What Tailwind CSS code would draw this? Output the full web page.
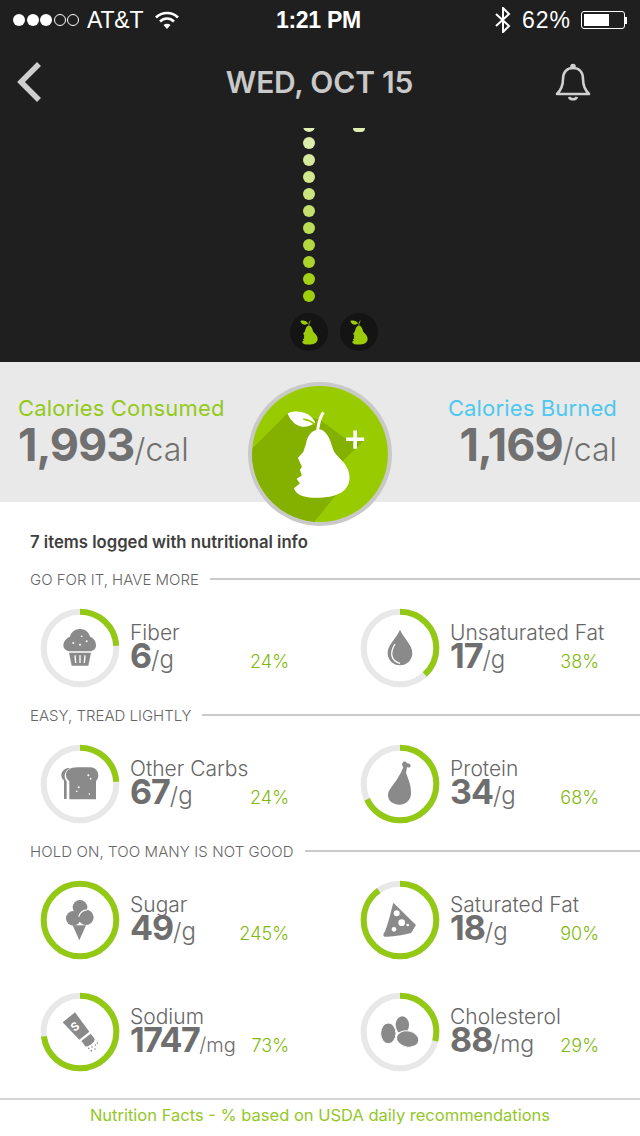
<!DOCTYPE html>
<html lang="en">
<head>
<meta charset="UTF-8">
<meta name="viewport" content="width=device-width, initial-scale=1.0">
<title>Nutrition</title>
<script src="https://cdn.jsdelivr.net/npm/@tailwindcss/browser@4"></script>
</head>
<body class="bg-white [font-family:Inter,sans-serif]">
<svg width="0" height="0" class="absolute">
  <symbol id="pear" viewBox="200 122 192 264">
    <path d="M203 130C235 118 272 128 286 158C262 178 222 178 203 130Z"/>
    <path d="M293 180C296 160 298 145 310 128" fill="none" stroke="currentColor" stroke-width="9"/>
    <path d="M297 178C318 180 330 205 338 235C345 262 385 275 388 318C390 355 365 378 310 382C270 384 232 382 222 354L240 340L230 326L246 316L240 300L246 290L234 264L250 246L258 222C262 200 272 182 297 178Z"/>
  </symbol>
</svg>

<div class="relative w-[640px] h-[1136px] overflow-hidden">
  <!-- dark top -->
  <div class="h-[362px] bg-[#1f1f1f] flex flex-col">
    <div class="relative h-10 flex items-center pl-[13px] pr-[13px] text-white [font-family:'Liberation_Sans',sans-serif] text-[23px]">
      <div class="flex gap-[1.5px]">
        <span class="w-3 h-3 rounded-full bg-white"></span>
        <span class="w-3 h-3 rounded-full bg-white"></span>
        <span class="w-3 h-3 rounded-full bg-white"></span>
        <span class="w-3 h-3 rounded-full border border-white"></span>
        <span class="w-3 h-3 rounded-full border border-white"></span>
      </div>
      <span class="ml-2 tracking-[-0.2px] w-[60px]">AT&amp;T</span>
      <svg class="ml-[7px]" width="26" height="20" viewBox="0 0 26 20" fill="none" stroke="#fff" stroke-width="2.6">
        <path d="M2 7.5C8 1.5 18 1.5 24 7.5"/>
        <path d="M6 11.5C10 7.5 16 7.5 20 11.5"/>
        <path d="M13 19L9.5 15C11.5 13.3 14.5 13.3 16.5 15Z" fill="#fff" stroke="none"/>
      </svg>
      <span class="ml-[96px] font-bold w-[88px] whitespace-nowrap tracking-[-0.3px]">1:21 PM</span>
      <svg class="ml-[130px]" width="18" height="26" viewBox="0 0 18 26" fill="none" stroke="#fff" stroke-width="2">
        <path d="M2 7L15 19L9 25V1L15 7L2 19"/>
      </svg>
      <span class="ml-[10px] w-[50px] whitespace-nowrap tracking-[1px]">62%</span>
      <div class="ml-[9px] flex items-center">
        <div class="w-11 h-[18px] rounded-[3px] border border-white p-[2px]">
          <div class="w-[25px] h-full bg-white"></div>
        </div>
        <div class="w-[2px] h-[7px] bg-white"></div>
      </div>
    </div>

    <div class="h-[88px] grid grid-cols-[1fr_auto_1fr] items-center pl-[15px] pr-[48px] pb-[4px]">
      <svg width="28" height="42" viewBox="0 0 28 42" fill="none" stroke="#cfcfcf" stroke-width="5.5">
        <path d="M24 3L6 21L24 39"/>
      </svg>
      <span class="text-[30px] font-semibold text-[#c9c9c9] tracking-[-0.2px] translate-x-[16px]">WED, OCT 15</span>
      <svg class="justify-self-end" width="38" height="38" viewBox="0 0 38 38" fill="none" stroke="#d0d0d0" stroke-width="2.6">
        <path d="M3 31C8 26 9 22 9 16C9 9 13 5 19 5C25 5 29 9 29 16C29 22 30 26 35 31Z" stroke-linejoin="round"/>
        <circle cx="19" cy="3.5" r="1.5" fill="#d0d0d0"/>
        <path d="M15 34C16 37 22 37 23 34" stroke-width="2.5"/>
      </svg>
    </div>

    <!-- chart columns, clipped at the top -->
    <div class="h-[234px] flex justify-center gap-[12px] pl-[27px]">
      <div class="w-[38px] flex flex-col items-center">
        <div class="h-[176px] w-[12px] overflow-hidden flex flex-col justify-end gap-[5px] pb-[2px]">
          <span class="shrink-0 w-3 h-3 rounded-full bg-[#e0eeb2]"></span>
          <span class="shrink-0 w-3 h-3 rounded-full bg-[#dcecaa]"></span>
          <span class="shrink-0 w-3 h-3 rounded-full bg-[#d7e99c]"></span>
          <span class="shrink-0 w-3 h-3 rounded-full bg-[#d2e78e]"></span>
          <span class="shrink-0 w-3 h-3 rounded-full bg-[#cce47e]"></span>
          <span class="shrink-0 w-3 h-3 rounded-full bg-[#c5e06c]"></span>
          <span class="shrink-0 w-3 h-3 rounded-full bg-[#bcdc56]"></span>
          <span class="shrink-0 w-3 h-3 rounded-full bg-[#b4d83f]"></span>
          <span class="shrink-0 w-3 h-3 rounded-full bg-[#acd42c]"></span>
          <span class="shrink-0 w-3 h-3 rounded-full bg-[#a4d018]"></span>
          <span class="shrink-0 w-3 h-3 rounded-full bg-[#9fce0c]"></span>
        </div>
        <div class="mt-[9px] w-[38px] h-[38px] rounded-full bg-[#141414] flex items-center justify-center text-[#9ccb0a]">
          <svg width="18" height="25" fill="currentColor"><use href="#pear"/></svg>
        </div>
      </div>
      <div class="w-[38px] flex flex-col items-center">
        <div class="h-[176px] w-[12px] overflow-hidden">
          <span class="block w-3 h-[4px] rounded-b-full bg-[#e0eeb2]"></span>
        </div>
        <div class="mt-[9px] w-[38px] h-[38px] rounded-full bg-[#141414] flex items-center justify-center text-[#9ccb0a]">
          <svg width="18" height="25" fill="currentColor"><use href="#pear"/></svg>
        </div>
      </div>
    </div>
  </div>

  <!-- calories band -->
  <div class="h-[140px] bg-[#e9e9e9] flex justify-between pl-[18px] pr-[23px] pt-[31px]">
    <div>
      <div class="text-[22px] leading-[30px] text-[#93c91a] tracking-[0.15px] whitespace-nowrap">Calories Consumed</div>
      <div class="flex items-baseline text-[#707070] leading-[46px] -mt-[1px]">
        <span class="text-[45px] font-bold tracking-[-1px]">1,993</span><span class="text-[32px] font-light">/cal</span>
      </div>
    </div>
    <div class="flex flex-col items-end">
      <div class="text-[22px] leading-[30px] text-[#4ec8ee] tracking-[0.15px] whitespace-nowrap">Calories Burned</div>
      <div class="flex items-baseline text-[#707070] leading-[46px] -mt-[1px]">
        <span class="text-[45px] font-bold tracking-[-1px]">1,169</span><span class="text-[32px] font-light">/cal</span>
      </div>
    </div>
  </div>

  <!-- add button sits over the band edge -->
  <svg class="absolute left-[248px] top-[382px]" width="144" height="144" viewBox="85 37 430 430">
    <defs><clipPath id="face"><circle cx="300" cy="252" r="203"/></clipPath></defs>
    <circle cx="300" cy="252" r="215" fill="#c9c9c9"/>
    <circle cx="300" cy="252" r="203" fill="#99cc00"/>
    <polygon clip-path="url(#face)" fill="#84b000" points="205,128 40,293 40,520 230,520 388,325 350,290 432,212 375,205 300,150"/>
    <use href="#pear" x="200" y="122" width="192" height="264" fill="#fff" color="#fff"/>
    <path d="M250 148C262 150 275 155 285 164" fill="none" stroke="#99cc00" stroke-width="5"/>
    <path d="M378 208H432M405 182V236" stroke="#fff" stroke-width="11" fill="none"/>
  </svg>

  <!-- nutrients -->
  <div class="h-[634px] bg-white flex flex-col">
    <div class="pl-[30px] pt-[30px] text-[16.7px] leading-5 font-semibold text-[#3f3f3f]">7 items logged with nutritional info</div>

    <div class="flex items-center mt-[18px] pl-[30px] h-5 gap-[11px]">
      <span class="text-[15px] font-light text-[#666] whitespace-nowrap">GO FOR IT, HAVE MORE</span>
      <span class="flex-1 h-[2px] bg-[#c9c9c9] -translate-y-[1px]"></span>
    </div>
    <div class="grid grid-cols-2 mt-[18px]">
      <div class="flex pl-10 pr-[31px]">
        <svg width="80" height="80" viewBox="60 40 240 240" class="shrink-0">
          <circle cx="180" cy="160" r="109" fill="none" stroke="#e8e8e8" stroke-width="18"/>
          <circle cx="180" cy="160" r="109" fill="none" stroke="#93c814" stroke-width="18" pathLength="100" stroke-dasharray="24 100" transform="rotate(-90 180 160)"/>
          <path d="M180 103C200 103 208 118 210 126C222 130 228 142 228 152C228 164 218 170 208 170H152C142 170 130 164 130 152C130 142 138 130 150 126C152 118 160 103 180 103Z" fill="#8a8a8a"/>
          <path d="M147 174H213L205 213H155Z" fill="#8a8a8a"/>
          <path d="M165 182L167 205M180 182V205M195 182L193 205" stroke="#fff" stroke-width="4"/>
          <circle cx="160" cy="145" r="3" fill="#fff"/><circle cx="180" cy="150" r="3" fill="#fff"/><circle cx="200" cy="140" r="3" fill="#fff"/><circle cx="185" cy="125" r="2.5" fill="#fff"/>
        </svg>
        <div class="flex-1 min-w-0 ml-[10px] mt-[14px]">
          <div class="text-[21px] font-light leading-[22px] text-[#666]">Fiber</div>
          <div class="flex items-baseline justify-between leading-[30px] -mt-[3px] text-[#6e6e6e]">
            <div><span class="text-[34px] font-bold tracking-[-1px]">6</span><span class="text-[24px] font-light">/g</span></div>
            <span class="text-[18px] font-light text-[#80b90c]">24%</span>
          </div>
        </div>
      </div>
      <div class="flex pl-10 pr-[41px]">
        <svg width="80" height="80" viewBox="60 40 240 240" class="shrink-0">
          <circle cx="180" cy="160" r="109" fill="none" stroke="#e8e8e8" stroke-width="18"/>
          <circle cx="180" cy="160" r="109" fill="none" stroke="#93c814" stroke-width="18" pathLength="100" stroke-dasharray="38 100" transform="rotate(-90 180 160)"/>
          <path d="M180 105C190 130 217 150 217 175C217 197 200 212 180 212C160 212 143 197 143 175C143 150 170 130 180 105Z" fill="#8a8a8a"/>
          <path d="M165 148C150 172 150 198 180 206" fill="none" stroke="#fff" stroke-width="4"/>
        </svg>
        <div class="flex-1 min-w-0 ml-[10px] mt-[14px]">
          <div class="text-[21px] font-light leading-[22px] text-[#666] whitespace-nowrap">Unsaturated Fat</div>
          <div class="flex items-baseline justify-between leading-[30px] -mt-[3px] text-[#6e6e6e]">
            <div><span class="text-[34px] font-bold tracking-[-1px]">17</span><span class="text-[24px] font-light">/g</span></div>
            <span class="text-[18px] font-light text-[#80b90c]">38%</span>
          </div>
        </div>
      </div>
    </div>

    <div class="flex items-center mt-[18px] pl-[30px] h-5 gap-[11px]">
      <span class="text-[15px] font-light text-[#666] whitespace-nowrap">EASY, TREAD LIGHTLY</span>
      <span class="flex-1 h-[2px] bg-[#c9c9c9] -translate-y-[1px]"></span>
    </div>
    <div class="grid grid-cols-2 mt-[18px]">
      <div class="flex pl-10 pr-[31px]">
        <svg width="80" height="80" viewBox="60 448 240 240" class="shrink-0">
          <circle cx="180" cy="568" r="109" fill="none" stroke="#e8e8e8" stroke-width="18"/>
          <circle cx="180" cy="568" r="109" fill="none" stroke="#93c814" stroke-width="18" pathLength="100" stroke-dasharray="24 100" transform="rotate(-90 180 568)"/>
          <path d="M150 520C140 518 124 526 124 542C124 550 130 556 132 558V613H140V560C134 552 132 545 136 534C140 526 146 523 150 520Z" fill="#8a8a8a"/>
          <path d="M172 518H212C226 518 235 530 235 542C235 552 230 556 228 560V614H148V560C142 554 138 550 138 540C138 528 150 518 172 518Z" fill="#8a8a8a"/>
          <circle cx="205" cy="542" r="3" fill="#fff"/><circle cx="212" cy="552" r="2.5" fill="#fff"/><circle cx="176" cy="578" r="3" fill="#fff"/><circle cx="170" cy="590" r="2.5" fill="#fff"/><circle cx="208" cy="598" r="2.5" fill="#fff"/>
        </svg>
        <div class="flex-1 min-w-0 ml-[10px] mt-[14px]">
          <div class="text-[21px] font-light leading-[22px] text-[#666] whitespace-nowrap">Other Carbs</div>
          <div class="flex items-baseline justify-between leading-[30px] -mt-[3px] text-[#6e6e6e]">
            <div><span class="text-[34px] font-bold tracking-[-1px]">67</span><span class="text-[24px] font-light">/g</span></div>
            <span class="text-[18px] font-light text-[#80b90c]">24%</span>
          </div>
        </div>
      </div>
      <div class="flex pl-10 pr-[41px]">
        <svg width="80" height="80" viewBox="60 448 240 240" class="shrink-0">
          <circle cx="180" cy="568" r="109" fill="none" stroke="#e8e8e8" stroke-width="18"/>
          <circle cx="180" cy="568" r="109" fill="none" stroke="#93c814" stroke-width="18" pathLength="100" stroke-dasharray="68 100" transform="rotate(-90 180 568)"/>
          <path d="M188 504C192 498 200 500 201 506C208 505 214 510 211 516C208 520 204 518 201 518L198 535C206 555 214 575 213 598C212 618 196 630 178 630C158 630 144 618 144 602C144 585 160 572 172 552C180 540 186 528 190 518C186 512 185 508 188 504Z" fill="#8a8a8a"/>
        </svg>
        <div class="flex-1 min-w-0 ml-[10px] mt-[14px]">
          <div class="text-[21px] font-light leading-[22px] text-[#666]">Protein</div>
          <div class="flex items-baseline justify-between leading-[30px] -mt-[3px] text-[#6e6e6e]">
            <div><span class="text-[34px] font-bold tracking-[-1px]">34</span><span class="text-[24px] font-light">/g</span></div>
            <span class="text-[18px] font-light text-[#80b90c]">68%</span>
          </div>
        </div>
      </div>
    </div>

    <div class="flex items-center mt-[18px] pl-[30px] h-5 gap-[11px]">
      <span class="text-[15px] font-light tracking-[0.1px] text-[#666] whitespace-nowrap">HOLD ON, TOO MANY IS NOT GOOD</span>
      <span class="flex-1 h-[2px] bg-[#c9c9c9] -translate-y-[1px]"></span>
    </div>
    <div class="grid grid-cols-2 mt-[18px] gap-y-[32px]">
      <div class="flex pl-10 pr-[31px]">
        <svg width="80" height="80" viewBox="60 30 240 240" class="shrink-0">
          <circle cx="180" cy="150" r="109" fill="none" stroke="#93c814" stroke-width="18"/>
          <circle cx="180" cy="112" r="22" fill="#8a8a8a"/><circle cx="160" cy="145" r="22" fill="#8a8a8a"/><circle cx="198" cy="142" r="23" fill="#8a8a8a"/><circle cx="178" cy="140" r="15" fill="#8a8a8a"/>
          <path d="M158 166H198L178 211Z" fill="#8a8a8a"/>
          <path d="M176 140C180 126 192 120 200 120" fill="none" stroke="#fff" stroke-width="4"/>
        </svg>
        <div class="flex-1 min-w-0 ml-[10px] mt-[14px]">
          <div class="text-[21px] font-light leading-[22px] text-[#666]">Sugar</div>
          <div class="flex items-baseline justify-between leading-[30px] -mt-[3px] text-[#6e6e6e]">
            <div><span class="text-[34px] font-bold tracking-[-1px]">49</span><span class="text-[24px] font-light">/g</span></div>
            <span class="text-[18px] font-light text-[#80b90c]">245%</span>
          </div>
        </div>
      </div>
      <div class="flex pl-10 pr-[41px]">
        <svg width="80" height="80" viewBox="60 30 240 240" class="shrink-0">
          <circle cx="180" cy="150" r="109" fill="none" stroke="#e8e8e8" stroke-width="18"/>
          <circle cx="180" cy="150" r="109" fill="none" stroke="#93c814" stroke-width="18" pathLength="100" stroke-dasharray="90 100" transform="rotate(-90 180 150)"/>
          <path d="M160 98L228 165L214 188C190 196 150 200 134 200C128 198 130 190 134 186C146 160 152 125 160 98Z" fill="#8a8a8a"/>
          <circle cx="170" cy="130" r="9" fill="#fff"/><circle cx="185" cy="158" r="10" fill="#fff"/><circle cx="162" cy="178" r="7" fill="#fff"/><circle cx="203" cy="165" r="4" fill="#fff"/>
        </svg>
        <div class="flex-1 min-w-0 ml-[10px] mt-[14px]">
          <div class="text-[21px] font-light leading-[22px] text-[#666] whitespace-nowrap">Saturated Fat</div>
          <div class="flex items-baseline justify-between leading-[30px] -mt-[3px] text-[#6e6e6e]">
            <div><span class="text-[34px] font-bold tracking-[-1px]">18</span><span class="text-[24px] font-light">/g</span></div>
            <span class="text-[18px] font-light text-[#80b90c]">90%</span>
          </div>
        </div>
      </div>
      <div class="flex pl-10 pr-[31px]">
        <svg width="80" height="80" viewBox="60 367 240 240" class="shrink-0">
          <circle cx="180" cy="487" r="109" fill="none" stroke="#e8e8e8" stroke-width="18"/>
          <circle cx="180" cy="487" r="109" fill="none" stroke="#93c814" stroke-width="18" pathLength="100" stroke-dasharray="73 100" transform="rotate(-90 180 487)"/>
          <path d="M128 458L165 428L208 486L178 510Z" fill="#8a8a8a"/>
          <path d="M184 514L212 492L224 508C226 516 204 534 196 530Z" fill="#8a8a8a"/>
          <text x="168" y="482" transform="rotate(-38 168 475)" text-anchor="middle" font-size="34" font-weight="700" fill="#fff" font-family="Inter, sans-serif">S</text>
          <g fill="#8a8a8a"><circle cx="206" cy="536" r="2.5"/><circle cx="216" cy="532" r="2.5"/><circle cx="226" cy="526" r="2.5"/><circle cx="214" cy="543" r="2.5"/><circle cx="225" cy="538" r="2.5"/><circle cx="232" cy="520" r="2.5"/></g>
        </svg>
        <div class="flex-1 min-w-0 ml-[10px] mt-[14px]">
          <div class="text-[21px] font-light leading-[22px] text-[#666]">Sodium</div>
          <div class="flex items-baseline justify-between leading-[30px] -mt-[3px] text-[#6e6e6e]">
            <div class="whitespace-nowrap"><span class="text-[34px] font-bold tracking-[-1.5px]">1747</span><span class="text-[20px] font-light">/mg</span></div>
            <span class="text-[18px] font-light text-[#80b90c]">73%</span>
          </div>
        </div>
      </div>
      <div class="flex pl-10 pr-[41px]">
        <svg width="80" height="80" viewBox="60 367 240 240" class="shrink-0">
          <circle cx="180" cy="487" r="109" fill="none" stroke="#e8e8e8" stroke-width="18"/>
          <circle cx="180" cy="487" r="109" fill="none" stroke="#93c814" stroke-width="18" pathLength="100" stroke-dasharray="29 100" transform="rotate(-90 180 487)"/>
          <ellipse cx="187" cy="466" rx="20" ry="26" fill="#8a8a8a"/>
          <ellipse cx="145" cy="491" rx="23" ry="31" fill="#8a8a8a" stroke="#fff" stroke-width="3"/>
          <ellipse cx="203" cy="508" rx="34" ry="24" fill="#8a8a8a" stroke="#fff" stroke-width="3" transform="rotate(10 203 508)"/>
        </svg>
        <div class="flex-1 min-w-0 ml-[10px] mt-[14px]">
          <div class="text-[21px] font-light leading-[22px] text-[#666]">Cholesterol</div>
          <div class="flex items-baseline justify-between leading-[30px] -mt-[3px] text-[#6e6e6e]">
            <div><span class="text-[34px] font-bold tracking-[-1px]">88</span><span class="text-[23px] font-light">/mg</span></div>
            <span class="text-[18px] font-light text-[#80b90c]">29%</span>
          </div>
        </div>
      </div>
    </div>

    <div class="mt-[26px] border-t-2 border-[#d4d4d4] h-[33px] flex items-center justify-center text-[16.5px] text-[#93c72a] whitespace-nowrap">Nutrition Facts - % based on USDA daily recommendations</div>
  </div>
</div>
</body>
</html>
